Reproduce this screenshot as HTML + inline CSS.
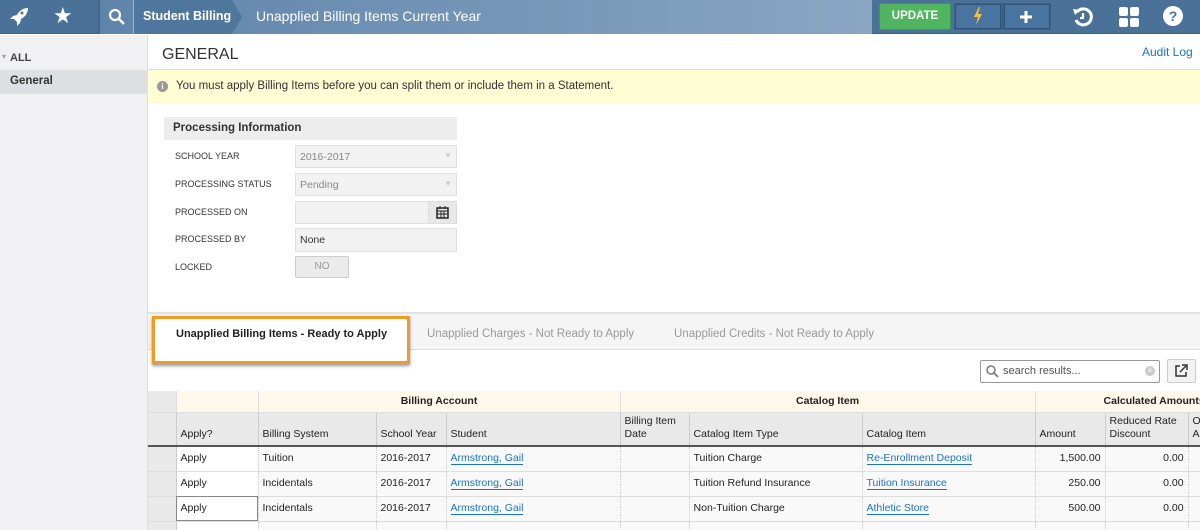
<!DOCTYPE html>
<html><head><meta charset="utf-8"><style>
*{box-sizing:border-box;margin:0;padding:0}
html,body{width:1200px;height:530px;overflow:hidden}
body{font-family:"Liberation Sans",sans-serif;font-size:11px;color:#222;background:#fff;position:relative}
.a{position:absolute}
.top{left:0;top:0;width:1200px;height:34px;background:#4a7299;border-bottom:1px solid #3d6085}
.crumb{left:100px;top:0;width:772px;height:34px;background:linear-gradient(90deg,#5f84aa,#8aa6c3)}
.lbl{color:#333;font-size:9px}
.fld{background:#f2f2f2;border:1px solid #e0e0e0;color:#888;font-size:10.5px;padding:5px 4px}
table{border-collapse:collapse;position:absolute;left:148px;top:391px;table-layout:fixed;width:1062px}
td,th{border-right:1px dotted #ccc;border-bottom:1px solid #ddd;padding:0 4px;font-size:10.5px;white-space:nowrap;overflow:hidden;line-height:13px}
th{font-weight:bold;text-align:left}
tr.g th{background:#fdf8e9;height:21px;text-align:center;border-right:1px solid #ddd}
tr.h th{background:#e9e9e9;height:34px;vertical-align:bottom;padding-bottom:4px;border-right:1px solid #ccc;border-bottom:2px solid #555;font-weight:normal;color:#222}
tr.d td{height:25px;background:#f9f9f9}
td.hd,th.hd{background:#e9e9e9!important;border-right:1px solid #ccc}
a{color:#1a73c9;text-decoration:none;border-bottom:1px solid #1a73c9}
.r{text-align:right}
</style></head><body>
<div class="a top"></div>
<div class="a crumb"></div>
<svg class="a" style="left:8px;top:7px" width="22" height="20" viewBox="0 0 22 20"><path d="M20 1c-5 0-9 3-11 7l-4 1-3 3 4 0 3 3 0 4 3-3 1-4c4-2 7-6 7-11z" fill="#fff"/><circle cx="14" cy="6" r="1.5" fill="#4a7299"/></svg>
<div class="a" style="left:53px;top:3px;color:#fff;font-size:22px">★</div>
<div class="a" style="left:98px;top:0;width:2px;height:34px;background:#3f6588"></div>
<svg class="a" style="left:108px;top:8px" width="18" height="18"><circle cx="7" cy="7" r="5" stroke="#fff" stroke-width="2.2" fill="none"/><path d="M11 11l5 5" stroke="#fff" stroke-width="2.5"/></svg>
<div class="a" style="left:133px;top:0;width:1px;height:34px;background:#aac"></div>
<div class="a" style="left:134px;top:0;width:98px;height:34px;background:#4f769c"></div>
<svg class="a" style="left:232px;top:0" width="14" height="34"><path d="M0 0L10 17L0 34Z" fill="#4f769c"/></svg>
<div class="a" style="left:143px;top:9px;color:#fff;font-weight:bold;font-size:12.5px">Student Billing</div>
<div class="a" style="left:256px;top:8px;color:#fff;font-size:14px">Unapplied Billing Items Current Year</div>
<div class="a" style="left:879px;top:3px;width:72px;height:27px;background:#51b461;border:1px solid #3e9a4b;border-radius:2px;color:#fff;font-weight:bold;font-size:11.5px;text-align:center;line-height:25px">UPDATE</div>
<div class="a" style="left:954px;top:3px;width:97px;height:27px;background:#3c6286;border-radius:2px"></div>
<div class="a" style="left:955px;top:4px;width:46px;height:25px;background:#4a74a0;border:1px solid #2f5276"></div>
<div class="a" style="left:1004px;top:4px;width:46px;height:25px;background:#4a74a0;border:1px solid #2f5276"></div>
<svg class="a" style="left:971px;top:7px" width="14" height="19"><path d="M8 0L3 10h4L5 18l6-11H7L9 0z" fill="#f6c243"/></svg>
<svg class="a" style="left:1019px;top:10px" width="14" height="14"><path d="M7 1v12M1 7h12" stroke="#fff" stroke-width="3"/></svg>
<svg class="a" style="left:1072px;top:6px" width="22" height="22"><path d="M5 6A8 8 0 1 1 4 14" stroke="#fff" stroke-width="3" fill="none"/><path d="M1 3l7 1-5 5z" fill="#fff"/><path d="M11 7v5h-3" stroke="#fff" stroke-width="2.2" fill="none"/></svg>
<svg class="a" style="left:1118px;top:6px" width="22" height="22"><rect x="1" y="1" width="9" height="9" rx="2" fill="#fff"/><rect x="12" y="1" width="9" height="9" rx="2" fill="#fff"/><rect x="1" y="12" width="9" height="9" rx="2" fill="#fff"/><rect x="12" y="12" width="9" height="9" rx="2" fill="#fff"/></svg>
<svg class="a" style="left:1162px;top:5px" width="22" height="22"><circle cx="11" cy="11" r="10" fill="#fff"/><text x="11" y="16" font-size="14" font-weight="bold" text-anchor="middle" fill="#4a7299" font-family="Liberation Sans">?</text></svg>

<div class="a" style="left:0;top:35px;width:148px;height:495px;background:#f1f1f3;border-right:1px solid #ddd"></div>
<div class="a" style="left:2px;top:52px;color:#999;font-size:8px">▾</div>
<div class="a" style="left:10px;top:52px;font-weight:bold;font-size:11px;color:#444">ALL</div>
<div class="a" style="left:0;top:70px;width:148px;height:24px;background:#dedfe3"></div>
<div class="a" style="left:10px;top:75px;font-weight:bold;font-size:11.5px;color:#333">General</div>

<div class="a" style="left:162px;top:46px;font-size:16px;color:#333">GENERAL</div>
<div class="a" style="left:1142px;top:45px;font-size:12px;color:#1a73c9">Audit Log</div>
<div class="a" style="left:148px;top:69px;width:1052px;height:34px;background:#fefdd3;border-top:1px solid #ddd"></div>
<div class="a" style="left:157px;top:81px;width:11px;height:11px;border-radius:50%;background:#999;color:#fff;font-size:8px;text-align:center;line-height:11px;font-weight:bold">i</div>
<div class="a" style="left:176px;top:80px;font-size:11.5px;color:#333">You must apply Billing Items before you can split them or include them in a Statement.</div>

<div class="a" style="left:164px;top:117px;width:293px;height:23px;background:#ededed"></div>
<div class="a" style="left:173px;top:122px;font-weight:bold;font-size:11.5px;color:#333">Processing Information</div>
<div class="a lbl" style="left:175px;top:151px">SCHOOL YEAR</div>
<div class="a lbl" style="left:175px;top:179px">PROCESSING STATUS</div>
<div class="a lbl" style="left:175px;top:207px">PROCESSED ON</div>
<div class="a lbl" style="left:175px;top:234px">PROCESSED BY</div>
<div class="a lbl" style="left:175px;top:262px">LOCKED</div>
<div class="a fld" style="left:295px;top:145px;width:162px;height:23px">2016-2017<span style="float:right;color:#ccc;font-size:8px">▼</span></div>
<div class="a fld" style="left:295px;top:173px;width:162px;height:23px">Pending<span style="float:right;color:#ccc;font-size:8px">▼</span></div>
<div class="a fld" style="left:295px;top:201px;width:162px;height:23px"></div>
<div class="a" style="left:428px;top:201px;width:29px;height:23px;background:#e8e8e8;border:1px solid #ddd"></div>
<svg class="a" style="left:436px;top:205px" width="13" height="14"><rect x="1" y="3" width="11" height="10" fill="none" stroke="#222" stroke-width="1.5"/><path d="M1 6h11M4 1v3M9 1v3M5 6v7M8 6v7M1 9h11" stroke="#222" stroke-width="1"/></svg>
<div class="a fld" style="left:295px;top:228px;width:162px;height:24px;color:#333">None</div>
<div class="a" style="left:295px;top:256px;width:54px;height:22px;background:#ebebeb;border:1px solid #ccc;border-radius:2px;color:#999;text-align:center;line-height:20px;font-size:10px">NO</div>

<div class="a" style="left:148px;top:312px;width:1052px;height:38px;background:#f5f5f5;border-top:2px solid #e2e2e2;border-bottom:1px solid #ddd"></div>
<div class="a" style="left:152px;top:316px;width:258px;height:48px;border:3px solid #f39a23;background:#fff;box-shadow:0 2px 3px rgba(0,0,0,.4)"></div>
<div class="a" style="left:176px;top:328px;font-weight:bold;font-size:11px;color:#222">Unapplied Billing Items - Ready to Apply</div>
<div class="a" style="left:427px;top:328px;font-size:11.5px;color:#999">Unapplied Charges - Not Ready to Apply</div>
<div class="a" style="left:674px;top:328px;font-size:11.5px;color:#999">Unapplied Credits - Not Ready to Apply</div>

<div class="a" style="left:980px;top:360px;width:180px;height:23px;border:1px solid #999;border-radius:2px;background:#fff"></div>
<svg class="a" style="left:986px;top:365px" width="13" height="13"><circle cx="5" cy="5" r="4" stroke="#777" stroke-width="1.5" fill="none"/><path d="M8 8l4 4" stroke="#777" stroke-width="1.8"/></svg>
<div class="a" style="left:1003px;top:365px;font-size:11px;color:#555">search results...</div>
<div class="a" style="left:1145px;top:366px;width:10px;height:10px;border-radius:50%;background:#ccc;color:#fff;font-size:8px;text-align:center;line-height:10px">×</div>
<div class="a" style="left:1167px;top:359px;width:29px;height:24px;background:#f2f2f2;border:1px solid #ccc;border-radius:2px"></div>
<svg class="a" style="left:1174px;top:364px" width="14" height="14"><path d="M6 2H2v10h10V8" stroke="#333" stroke-width="1.5" fill="none"/><path d="M6 8l6-6M8 1h5v5" stroke="#333" stroke-width="1.5" fill="none"/></svg>

<table>
<colgroup><col style="width:28px"><col style="width:82px"><col style="width:118px"><col style="width:70px"><col style="width:174px"><col style="width:69px"><col style="width:173px"><col style="width:173px"><col style="width:70px"><col style="width:83px"><col style="width:22px"></colgroup>
<tr class="g"><th class="hd"></th><th style="border-right:1px solid #ddd"></th><th colspan="3">Billing Account</th><th colspan="3">Catalog Item</th><th colspan="3" style="text-align:left;padding-left:68px">Calculated Amounts</th></tr>
<tr class="h"><th class="hd"></th><th>Apply?</th><th>Billing System</th><th>School Year</th><th>Student</th><th>Billing Item<br>Date</th><th>Catalog Item Type</th><th>Catalog Item</th><th>Amount</th><th>Reduced Rate<br>Discount</th><th>O<br>A</th></tr>
<tr class="d"><td class="hd"></td><td style="background:#fff">Apply</td><td>Tuition</td><td>2016-2017</td><td><a>Armstrong, Gail</a></td><td></td><td>Tuition Charge</td><td><a>Re-Enrollment Deposit</a></td><td class="r">1,500.00</td><td class="r">0.00</td><td></td></tr>
<tr class="d"><td class="hd"></td><td style="background:#fff">Apply</td><td>Incidentals</td><td>2016-2017</td><td><a>Armstrong, Gail</a></td><td></td><td>Tuition Refund Insurance</td><td><a>Tuition Insurance</a></td><td class="r">250.00</td><td class="r">0.00</td><td></td></tr>
<tr class="d"><td class="hd"></td><td style="background:#fff;outline:1px solid #888;outline-offset:-1px">Apply</td><td>Incidentals</td><td>2016-2017</td><td><a>Armstrong, Gail</a></td><td></td><td>Non-Tuition Charge</td><td><a>Athletic Store</a></td><td class="r">500.00</td><td class="r">0.00</td><td></td></tr>
<tr class="d"><td class="hd"></td><td style="background:#fff"></td><td></td><td></td><td></td><td></td><td></td><td></td><td></td><td></td><td></td></tr>
</table>
</body></html>
